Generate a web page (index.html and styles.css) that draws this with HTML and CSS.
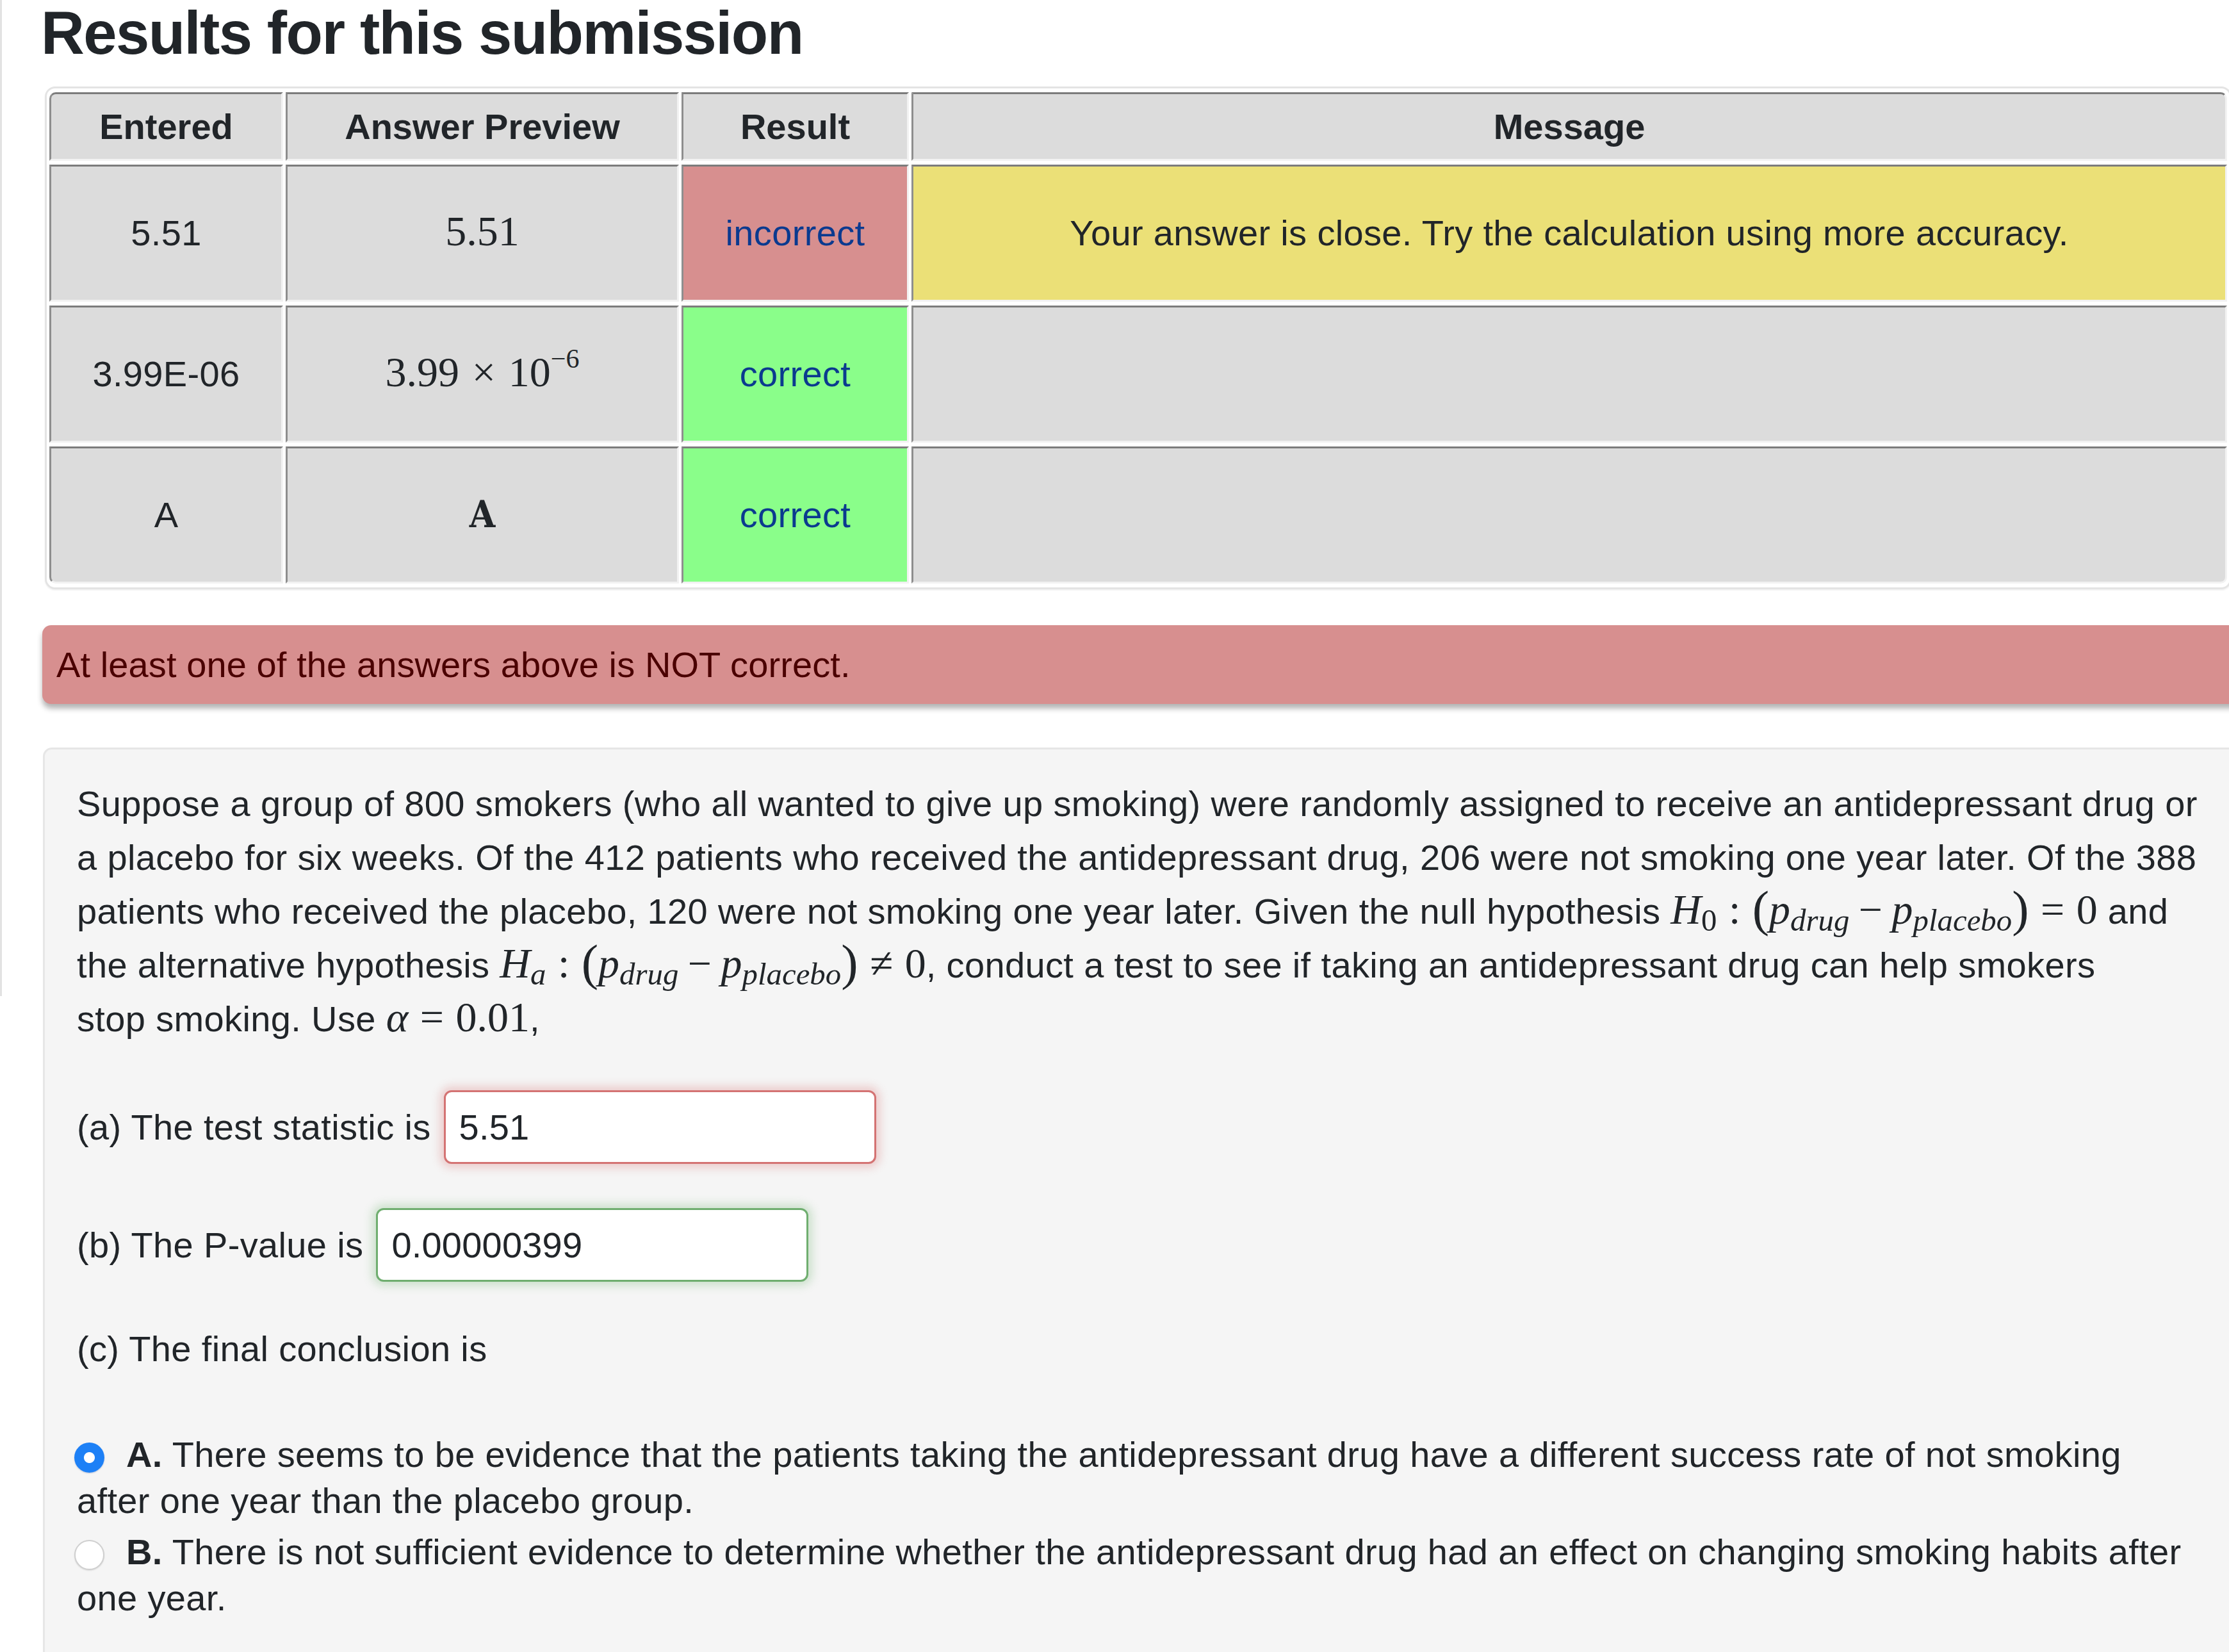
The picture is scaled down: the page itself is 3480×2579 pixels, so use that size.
FILE: index.html
```html
<!DOCTYPE html>
<html lang="en">
<head>
<meta charset="utf-8">
<title>Results for this submission</title>
<link rel="stylesheet" href="styles.css">
</head>
<body>
<div class="page">
  <main class="content">
    <h1 class="title">Results for this submission</h1>

    <div class="results-wrap">
      <table class="results">
        <colgroup>
          <col class="c-entered">
          <col class="c-preview">
          <col class="c-result">
          <col class="c-message">
        </colgroup>
        <thead>
          <tr>
            <th>Entered</th>
            <th>Answer Preview</th>
            <th>Result</th>
            <th>Message</th>
          </tr>
        </thead>
        <tbody>
          <tr>
            <td>5.51</td>
            <td><span class="mj">5.51</span></td>
            <td class="res bad">incorrect</td>
            <td class="msg warn">Your answer is close. Try the calculation using more accuracy.</td>
          </tr>
          <tr>
            <td>3.99E-06</td>
            <td><span class="mj">3.99<span class="mj-times">×</span>10<sup>−6</sup></span></td>
            <td class="res ok">correct</td>
            <td class="msg"></td>
          </tr>
          <tr>
            <td>A</td>
            <td><span class="mj-tt">A</span></td>
            <td class="res ok">correct</td>
            <td class="msg"></td>
          </tr>
        </tbody>
      </table>
    </div>

    <div class="alert">At least one of the answers above is NOT correct.</div>

    <div class="problem">
      <p class="statement">Suppose a group of 800 smokers (who all wanted to give up smoking) were randomly assigned to receive an antidepressant drug or<br>a placebo for six weeks. Of the 412 patients who received the antidepressant drug, 206 were not smoking one year later. Of the 388<br>patients who received the placebo, 120 were not smoking one year later. Given the null hypothesis <span class="math"><i>H</i><sub>0</sub><span class="rel">:</span><span class="paren">(</span><i>p</i><sub><i>drug</i></sub><span class="bin">−</span><i>p</i><sub><i>placebo</i></sub><span class="paren">)</span><span class="rel">=</span>0</span> and<br>the alternative hypothesis <span class="math"><i>H</i><sub><i>a</i></sub><span class="rel">:</span><span class="paren">(</span><i>p</i><sub><i>drug</i></sub><span class="bin">−</span><i>p</i><sub><i>placebo</i></sub><span class="paren">)</span><span class="rel">≠</span>0</span>, conduct a test to see if taking an antidepressant drug can help smokers<br>stop smoking. Use <span class="math"><i>α</i><span class="rel">=</span>0.01</span>,</p>

      <div class="ans-row first">
        <label class="ans-label" for="ans-a">(a) The test statistic is</label>
        <input id="ans-a" class="ans bad" type="text" value="5.51">
      </div>

      <div class="ans-row">
        <label class="ans-label" for="ans-b">(b) The P-value is</label>
        <input id="ans-b" class="ans good" type="text" value="0.00000399">
      </div>

      <p class="part-c">(c) The final conclusion is</p>

      <div class="choices">
        <label class="choice"><input class="radio" type="radio" name="concl" checked><b>A.</b> There seems to be evidence that the patients taking the antidepressant drug have a different success rate of not smoking<br>after one year than the placebo group.</label>
        <label class="choice"><input class="radio" type="radio" name="concl"><b>B.</b> There is not sufficient evidence to determine whether the antidepressant drug had an effect on changing smoking habits after<br>one year.</label>
      </div>
    </div>
  </main>
</div>
</body>
</html>
```

FILE: styles.css
```css
* {
  box-sizing: border-box;
}

html,
body {
  margin: 0;
  padding: 0;
  overflow: hidden;
  background: #ffffff;
}

body {
  font-family: "Liberation Sans", Arial, sans-serif;
  font-size: 56px;
  line-height: 84px;
  color: #212529;
}

.page {
  position: relative;
  width: 3480px;
  height: 2579px;
  overflow: hidden;
}

.page::before {
  content: "";
  position: absolute;
  left: 0;
  top: 0;
  width: 3px;
  height: 1555px;
  background: #e2e2e2;
}

.content {
  width: 3600px;
  padding-left: 66px;
}

.title {
  margin: 0 0 31px -2px;
  font-size: 94px;
  line-height: 104px;
  font-weight: 700;
  letter-spacing: -1.6px;
  color: #212529;
}

/* ---------- results table ---------- */
.results-wrap {
  margin-left: 4px;
  width: 3414px;
  border: 3px solid #e4e4e4;
  border-radius: 16px;
  box-shadow: 0 2px 2px rgba(0, 0, 0, 0.05);
  background: #ffffff;
}

.results {
  border-collapse: separate;
  border-spacing: 4px 6px;
  table-layout: fixed;
  width: 3408px;
  letter-spacing: 0.35px;
}

.c-entered { width: 365px; }
.c-preview { width: 614px; }
.c-result { width: 355px; }
.c-message { width: 2054px; }

.results th,
.results td {
  background: #dcdcdc;
  border-style: solid;
  border-width: 3px;
  border-color: #7c7c7c #f2f2f2 #f2f2f2 #8e8e8e;
  padding: 0 7px;
  text-align: center;
  vertical-align: middle;
  white-space: nowrap;
}

.results th {
  font-weight: 700;
  letter-spacing: 0;
}

.results thead tr {
  height: 107px;
}

.results tbody tr {
  height: 214px;
}

.results thead th:first-child { border-top-left-radius: 10px; }
.results thead th:last-child { border-top-right-radius: 10px; }
.results tbody tr:last-child td:first-child { border-bottom-left-radius: 10px; }
.results tbody tr:last-child td:last-child { border-bottom-right-radius: 10px; }

.results .res {
  color: #0b3a8f;
}

.results .res.bad {
  background: #d78f8f;
}

.results .res.ok {
  background: #8afe8a;
}

.results .msg.warn {
  background: #ebe077;
}

.mj {
  font-family: "Liberation Serif", "Times New Roman", serif;
  font-size: 66px;
  line-height: 1;
  letter-spacing: 0;
}

.mj-times {
  margin: 0 0.3em;
}

.mj sup {
  font-size: 42px;
  line-height: 0;
  vertical-align: 29px;
}

.mj-tt {
  font-family: "DejaVu Serif", "Liberation Serif", serif;
  font-stretch: condensed;
  font-weight: 700;
  font-size: 58px;
  line-height: 1;
  letter-spacing: 0;
}

/* ---------- alert ---------- */
.alert {
  margin-top: 56px;
  width: 3480px;
  padding: 20px 22px 19px;
  background: #d78f8f;
  color: #4a0000;
  border-radius: 14px;
  box-shadow: 0 7px 9px rgba(0, 0, 0, 0.3);
  letter-spacing: 0.1px;
}

/* ---------- problem ---------- */
.problem {
  margin-top: 68px;
  margin-left: 1px;
  width: 3460px;
  background: #f5f5f5;
  border: 3px solid #e6e6e6;
  border-radius: 14px;
  padding: 43px 40px 80px 50px;
  letter-spacing: 0.36px;
}

.statement {
  margin: 0;
  white-space: nowrap;
}

.math {
  font-family: "Liberation Serif", "Times New Roman", serif;
  font-size: 66px;
  line-height: 1;
  white-space: nowrap;
  letter-spacing: 0;
}

.math i {
  font-style: italic;
}

.math sub {
  font-size: 0.74em;
  line-height: 0;
  vertical-align: -0.22em;
}

.math .rel {
  margin: 0 0.28em;
}

.math .bin {
  margin: 0 0.22em;
}

.math .paren {
  font-size: 1.2em;
  line-height: 0;
  vertical-align: -0.04em;
}

.ans-row {
  display: flex;
  align-items: center;
  gap: 20px;
  margin-top: 69px;
}

.ans {
  width: 675px;
  height: 115px;
  padding: 0 21px;
  border: 3px solid #cccccc;
  border-radius: 12px;
  background: #ffffff;
  font-family: "Liberation Sans", Arial, sans-serif;
  font-size: 56px;
  letter-spacing: 0.2px;
  color: #212529;
  outline: none;
}

.ans.bad {
  border-color: #d47373;
  box-shadow: 0 0 14px 6px rgba(214, 110, 110, 0.3);
}

.ans.good {
  border-color: #6fae6f;
  box-shadow: 0 0 14px 6px rgba(110, 180, 110, 0.3);
}

.part-c {
  margin: 63px 0 0;
}

.choices {
  margin-top: 87px;
}

.choice {
  display: block;
  line-height: 72px;
  white-space: nowrap;
}

.choice + .choice {
  margin-top: 8px;
}

.choice b {
  font-weight: 700;
}

.radio {
  appearance: none;
  -webkit-appearance: none;
  width: 47px;
  height: 47px;
  margin: 0 34px 0 -4px;
  border-radius: 50%;
  border: 2px solid #d0d0d0;
  background: #ffffff;
  vertical-align: middle;
  box-shadow: 0 1px 2px rgba(0, 0, 0, 0.12);
}

.radio:checked {
  border: none;
  background: radial-gradient(circle, #ffffff 0 8px, #1d80f6 9px);
  box-shadow: 0 1px 2px rgba(0, 40, 120, 0.25);
}
```
